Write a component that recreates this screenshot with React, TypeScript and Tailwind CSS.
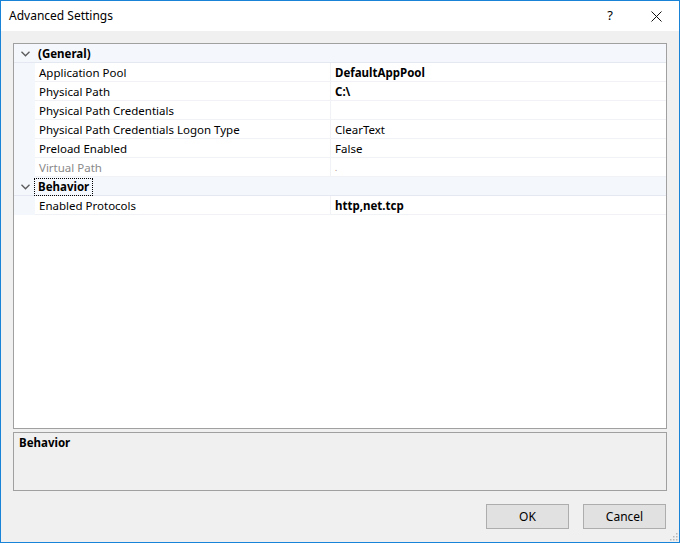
import React from "react";

type Row = { name: string; value: string; bold?: boolean; disabled?: boolean };
type Category = { title: string; focused?: boolean; rows: Row[] };

const categories: Category[] = [
  {
    title: "(General)",
    rows: [
      { name: "Application Pool", value: "DefaultAppPool", bold: true },
      { name: "Physical Path", value: "C:\\", bold: true },
      { name: "Physical Path Credentials", value: "" },
      { name: "Physical Path Credentials Logon Type", value: "ClearText" },
      { name: "Preload Enabled", value: "False" },
      { name: "Virtual Path", value: ".", disabled: true },
    ],
  },
  {
    title: "Behavior",
    focused: true,
    rows: [{ name: "Enabled Protocols", value: "http,net.tcp", bold: true }],
  },
];

const Chevron = () => (
  <svg width="9" height="6" viewBox="0 0 9 6" className="block">
    <path d="M0.5 0.8 L4.5 4.8 L8.5 0.8" fill="none" stroke="#5a5a5a" strokeWidth="1.3" />
  </svg>
);

const CategoryRow: React.FC<{ cat: Category }> = ({ cat }) => (
  <div className="flex h-[19px] bg-[#f4f7fc] border-b border-[#e4e9f1]">
    <div className="w-[21px] flex items-center justify-center pl-[1px] pt-[1px]">
      <Chevron />
    </div>
    <div className="flex items-center pt-[1px]">
      <span
        className={
          "font-bold leading-[16px] px-[3px] " +
          (cat.focused ? "outline outline-1 outline-dotted outline-black" : "")
        }
      >
        {cat.title}
      </span>
    </div>
  </div>
);

const PropRow: React.FC<{ row: Row }> = ({ row }) => (
  <div className="flex h-[19px]">
    <div className="w-[21px] bg-[#f4f7fc]" />
    <div className="flex flex-1 border-b border-[#f0f2f5] bg-white">
      <div
        className={
          "w-[296px] pl-[4px] pt-[1px] flex items-center border-r border-[#f0f2f5] " +
          (row.disabled ? "text-[#8a8a8a]" : "text-black")
        }
      >
        {row.name}
      </div>
      <div
        className={
          "flex-1 pl-[4px] pt-[1px] flex items-center " +
          (row.bold ? "font-bold " : "") +
          (row.disabled ? "text-[#a08070] text-[8px]" : "")
        }
      >
        {row.value}
      </div>
    </div>
  </div>
);

export default function App() {
  return (
    <div
      className="w-[680px] h-[543px] border border-[#1883d7] flex flex-col text-[11.5px] text-black select-none"
      style={{ fontFamily: '"Noto Sans", "Open Sans", sans-serif' }}
    >
      <div className="h-[30px] bg-white flex items-center shrink-0 text-[12px]">
        <div className="pl-[8px] flex-1">Advanced Settings</div>
        <div className="w-[46px] h-full flex items-center justify-center text-[13px]">?</div>
        <div className="w-[46px] h-full flex items-center justify-center">
          <svg width="11" height="11" viewBox="0 0 11 11">
            <path d="M0.5 0.5 L10.5 10.5 M10.5 0.5 L0.5 10.5" stroke="#111" strokeWidth="1" />
          </svg>
        </div>
      </div>
      <div className="flex-1 bg-[#f0f0f0] px-[12px] pt-[12px] flex flex-col relative">
        <div className="h-[386px] border border-[#a0a0a0] bg-white flex flex-col">
          {categories.map((cat) => (
            <React.Fragment key={cat.title}>
              <CategoryRow cat={cat} />
              {cat.rows.map((r) => (
                <PropRow key={r.name} row={r} />
              ))}
            </React.Fragment>
          ))}
        </div>
        <div className="mt-[3px] h-[59px] border border-[#a0a0a0] bg-[#f0f0f0] px-[5px] pt-[1px]">
          <div className="font-bold">Behavior</div>
        </div>
        <div className="mt-[13px] flex justify-end gap-[14px] pr-[1px] text-[12px]">
          <button className="w-[83px] h-[25px] bg-[#e1e1e1] border border-[#adadad]">OK</button>
          <button className="w-[83px] h-[25px] bg-[#e1e1e1] border border-[#adadad]">Cancel</button>
        </div>
        <svg width="10" height="10" viewBox="0 0 10 10" className="absolute right-[1px] bottom-[1px]">
          {[
            [8, 2],
            [8, 5],
            [5, 5],
            [8, 8],
            [5, 8],
            [2, 8],
          ].map(([x, y]) => (
            <rect key={`${x}-${y}`} x={x} y={y} width="1.5" height="1.5" fill="#b8b8b8" />
          ))}
        </svg>
      </div>
    </div>
  );
}
